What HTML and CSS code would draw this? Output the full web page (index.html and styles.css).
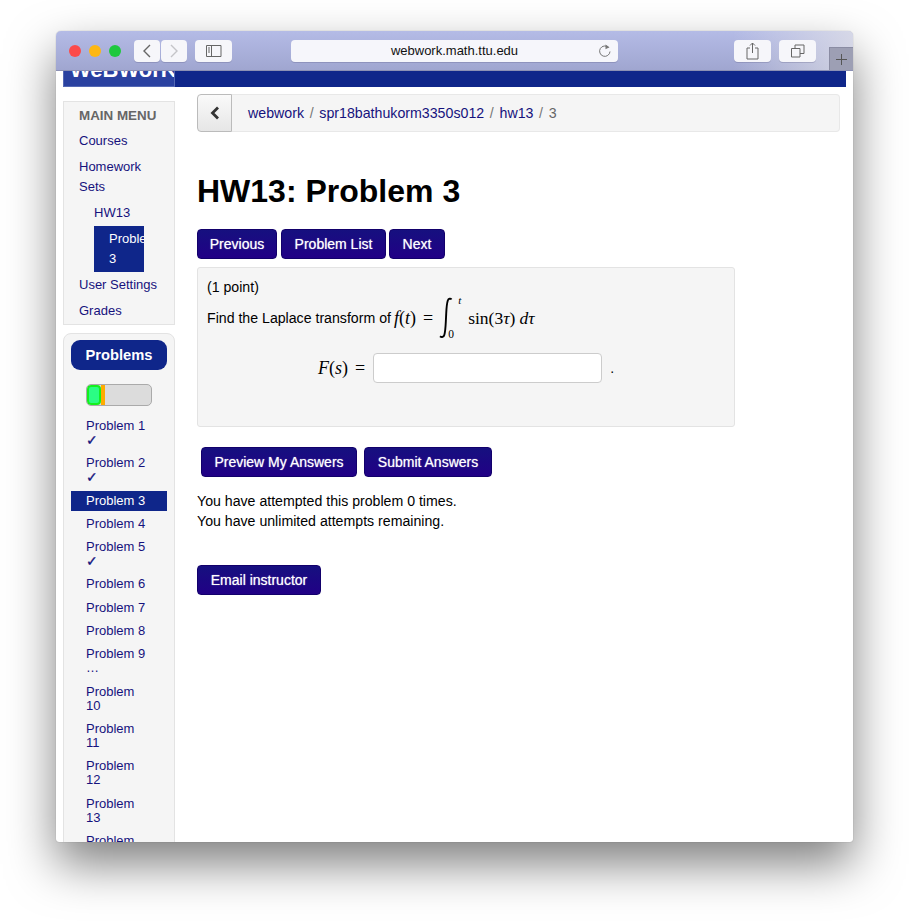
FILE: index.html
```html
<!DOCTYPE html>
<html lang="en">
<head>
<meta charset="utf-8">
<title>HW13: Problem 3</title>
<link rel="stylesheet" href="styles.css">
</head>
<body>
<div class="window">
  <div class="toolbar">
    <div class="lights"><span class="light red"></span><span class="light yellow"></span><span class="light green"></span></div>
    <div class="nav-pair">
      <span class="tool tool-nav"><svg width="12" height="16" viewBox="0 0 12 16"><path d="M9 2 3 8l6 6" fill="none" stroke="#666" stroke-width="1.4"/></svg></span>
      <span class="tool tool-nav"><svg width="12" height="16" viewBox="0 0 12 16"><path d="M3 2l6 6-6 6" fill="none" stroke="#c4c4c8" stroke-width="1.4"/></svg></span>
    </div>
    <span class="tool tool-side"><svg width="16" height="12" viewBox="0 0 16 12"><path d="M.5.5h14.500v11H.5zM5.500.5v11M2 3h2M2 5h2M2 7h2" fill="none" stroke="#666" stroke-width="1"/></svg></span>
    <div class="address"><span class="address-text">webwork.math.ttu.edu</span>
      <svg class="reload" width="13" height="14" viewBox="0 0 13 14"><path d="M10.500 3.500A5.200 5.200 0 1 0 12 7.500" fill="none" stroke="#777" stroke-width="1"/><path d="M7.500 0.500 11.500 3.200 7.500 5.200z" fill="#777"/></svg>
    </div>
    <span class="tool tool-share"><svg width="14" height="18" viewBox="0 0 14 18"><path d="M4 6H1v11h11V6H9M6.500 1v10M4 3.500 6.500 1 9 3.500" fill="none" stroke="#666" stroke-width="1"/></svg></span>
    <span class="tool tool-tabs"><svg width="14" height="14" viewBox="0 0 14 14"><path d="M.5 4.500h8.500v8.500H.5zM4 4.500V1h9v8.500H9" fill="none" stroke="#666" stroke-width="1"/></svg></span>
    <span class="new-tab"><svg width="13" height="13" viewBox="0 0 13 13"><path d="M6.500 1v11M1 6.500h11" stroke="#555" stroke-width="1" fill="none"/></svg></span>
  </div>
  <div class="page">
    <header class="banner"><span class="logo"><span class="logo-text">WeBWorK</span></span></header>
    <div class="columns">
      <aside class="sidebar">
        <nav class="menu">
          <div class="menu-title">MAIN MENU</div>
          <a class="menu-link">Courses</a>
          <a class="menu-link">Homework Sets</a>
          <a class="menu-link sub">HW13</a>
          <a class="menu-active"><span class="menu-active-first">Problem</span><span>3</span></a>
          <a class="menu-link">User Settings</a>
          <a class="menu-link">Grades</a>
        </nav>
        <section class="problems">
          <div class="pill">Problems</div>
          <div class="progress"><span class="p-green"></span><span class="p-orange"></span></div>
          <ul class="plist">
            <li><a>Problem 1<span class="check">✓</span></a></li>
            <li><a>Problem 2<span class="check">✓</span></a></li>
            <li class="current"><a>Problem 3</a></li>
            <li><a>Problem 4</a></li>
            <li><a>Problem 5<span class="check">✓</span></a></li>
            <li><a>Problem 6</a></li>
            <li><a>Problem 7</a></li>
            <li><a>Problem 8</a></li>
            <li><a>Problem 9<br>…</a></li>
            <li><a>Problem<br>10</a></li>
            <li><a>Problem<br>11</a></li>
            <li><a>Problem<br>12</a></li>
            <li><a>Problem<br>13</a></li>
            <li><a>Problem<br>14</a></li>
          </ul>
        </section>
      </aside>
      <main class="main">
        <div class="crumbs">
          <span class="back"><svg width="12" height="14" viewBox="0 0 12 14"><path d="M9 1.500 3.500 7 9 12.500" fill="none" stroke="#333" stroke-width="2.800"/></svg></span>
          <div class="crumb-bar"><a>webwork</a><i>/</i><a>spr18bathukorm3350s012</a><i>/</i><a>hw13</a><i>/</i><span class="crumb-last">3</span></div>
        </div>
        <h1 class="title">HW13: Problem 3</h1>
        <div class="nav-buttons">
          <button class="btn w-prev">Previous</button><button class="btn w-list">Problem List</button><button class="btn w-next">Next</button>
        </div>
        <section class="problem">
          <div class="pt">(1 point)</div>
          <div class="statement">
            <span>Find the Laplace transform of</span>
            <span class="math m-ft"><em>f</em>(<em>t</em>)<span class="eq">=</span></span>
            <span class="integral">
              <svg width="18" height="42" viewBox="0 0 18 42"><path d="M15.500 2.600c-.9-1.500-3-1.200-3.700.9C10.300 8 10.400 14 10 21c-.4 7-.4 12.500-1.700 17-.6 2-2.600 2.700-4.300 1.300" fill="none" stroke="#000" stroke-width="1.900"/></svg>
              <span class="lim-top"><em>t</em></span><span class="lim-bot">0</span>
            </span>
            <span class="math m-sin">sin(3<em>τ</em>) <em>dτ</em></span>
          </div>
          <div class="answer">
            <span class="math"><em>F</em>(<em>s</em>)<span class="eq">=</span></span>
            <input class="input" type="text" aria-label="answer">
            <span class="dot">.</span>
          </div>
        </section>
        <div class="submit-row">
          <button class="btn w-preview">Preview My Answers</button><button class="btn w-submit">Submit Answers</button>
        </div>
        <p class="attempts">You have attempted this problem 0 times.<br>You have unlimited attempts remaining.</p>
        <button class="btn w-email">Email instructor</button>
      </main>
    </div>
  </div>
</div>
</body>
</html>
```
FILE: styles.css
```css
* { box-sizing: border-box; }
html, body { margin: 0; height: 922px; overflow: hidden; background: #fff; }
body { padding: 31px 0 0 56px; font-family: "Liberation Sans", Arial, sans-serif; font-size: 14px; color: #000; }

.window {
  width: 797px; height: 811px; border-radius: 5px 5px 3px 3px; overflow: hidden; background: #fff;
  box-shadow: 0 22px 48px rgba(0,0,0,.5), 0 0 1px rgba(0,0,0,.4);
  display: flex; flex-direction: column;
}
.toolbar {
  height: 40px; flex: none; display: flex; align-items: flex-start; position: relative;
  background: linear-gradient(180deg, #b4bbe6 0%, #a0a6d0 100%);
  border-bottom: 1px solid #8b90b4; padding: 9px 0 0 13px;
}
.toolbar::after {
  content: ""; position: absolute; top: 0; right: 0; width: 120px; height: 39px;
  background: linear-gradient(90deg, rgba(226,226,232,0), rgba(226,226,232,.75));
  pointer-events: none;
}
.lights { display: flex; gap: 8px; margin-top: 5px; }
.light { width: 12px; height: 12px; border-radius: 50%; }
.red { background: #fc4a4a; }
.yellow { background: #fdb713; }
.green { background: #1fc83e; }
.tool { background: #f6f6fa; border-radius: 4px; height: 22px; display: flex; align-items: center; justify-content: center; box-shadow: 0 1px 0 rgba(80,80,120,.25); z-index: 1; }
.nav-pair { display: flex; gap: 1px; margin-left: 13px; }
.tool-nav { width: 26px; }
.tool-side { width: 37px; margin-left: 8px; }
.address {
  width: 327px; height: 22px; margin-left: 59px; background: #f6f6fb; border-radius: 4px; position: relative;
  text-align: center; line-height: 22px; font-size: 13px; box-shadow: 0 1px 0 rgba(80,80,120,.25); z-index: 1;
}
.address-text { color: #111; }
.reload { position: absolute; right: 7px; top: 4px; }
.tool-share { width: 37px; margin-left: 116px; }
.tool-tabs { width: 37px; margin-left: 8px; }
.new-tab {
  position: absolute; right: 0; top: 16px; width: 24px; height: 23px; background: #9d9fb4;
  border: 1px solid #8a8ca3; border-bottom: 0; border-right: 0; display: flex; align-items: center; justify-content: center; z-index: 1;
}

.page { flex: 1; min-height: 0; overflow: hidden; padding: 0 7px; }
.banner { height: 16px; background: #0f268a; overflow: hidden; }
.logo {
  display: block; width: 112px; height: 16px; background: #2a41a0; border: 1px solid #5468b4; border-top: 0;
  overflow: hidden; position: relative;
}
.logo-text { position: absolute; left: 6px; top: -16px; color: #fff; font-size: 22px; line-height: 29px; font-weight: bold; white-space: nowrap; }

.columns { display: flex; align-items: flex-start; }
.sidebar { width: 112px; flex: none; margin-top: 14px; }
.main { width: 643px; margin-left: 22px; margin-top: 7px; flex: none; font-size: 14.150px; }
a { color: #15127d; }

.menu { height: 224px; background: #f5f5f5; border: 1px solid #e3e3e3; padding: 4px 0 0 15px; font-size: 13px; }
.menu-title { font-weight: bold; color: #666; font-size: 13.400px; line-height: 20px; margin-bottom: 5px; }
.menu-link { display: block; line-height: 20px; margin-bottom: 6px; width: 90px; }
.menu-link.sub { padding-left: 15px; width: 90px; margin-bottom: 3px; }
.menu-active { display: flex; flex-direction: column; width: 50px; height: 46px; margin: 0 0 3px 15px; background: #0f268a; color: #fff; padding: 3px 0 0 15px; line-height: 20px; overflow: hidden; white-space: nowrap; }
.menu-active-first { display: block; line-height: 20px; }

.problems { margin-top: 8px; height: 520px; background: #f5f5f5; border: 1px solid #e3e3e3; border-radius: 8px; padding: 6px 7px 0; font-size: 13px; }
.pill { height: 30px; background: #0f268a; border-radius: 9px; color: #fff; font-weight: bold; font-size: 14.700px; line-height: 31px; text-align: center; }
.progress { width: 66px; height: 22px; margin: 14px 0 0 15px; background: #dcdcdc; border: 1px solid #aaa; border-radius: 5px; display: flex; overflow: hidden; }
.p-green { width: 14px; background: #2bfd84; border: 2px solid #14f01e; border-radius: 4px; }
.p-orange { width: 4px; background: #ffab00; }
.plist { list-style: none; margin: 8px 0 0; padding: 0; }
.plist li { padding: 5px 15px 4.350px; line-height: 14px; }
.check { display: block; height: 14px; line-height: 14px; font-size: 14px; -webkit-text-stroke: .3px currentColor; overflow: visible; }
.plist li.current { background: #0f268a; height: 20px; padding-top: 3px; margin: 2px 0 0; }
.plist li.current a { color: #fff; }
.plist li.current + li { padding-top: 6px; }

.crumbs { display: flex; height: 38px; }
.back { width: 35px; height: 38px; flex: none; border: 1px solid #bbb; border-radius: 4px 0 0 4px; background: linear-gradient(180deg, #fafafa, #e6e6e6); display: flex; align-items: center; justify-content: center; }
.crumb-bar { flex: 1; background: #f5f5f5; border: 1px solid #e8e8e8; border-left: 0; border-radius: 0 4px 4px 0; padding-left: 16px; line-height: 36px; font-size: 14.200px; }
.crumb-bar i { font-style: normal; color: #777; margin: 0 5.700px; }
.crumb-last { color: #666; }

.title { margin: 40px 0 0; font-size: 32px; line-height: 38px; font-weight: bold; }
.nav-buttons { margin-top: 19px; display: flex; }
.btn {
  display: block; height: 30px; padding: 0; border: 1px solid #12006b; border-radius: 4px;
  font: 14px/28px "Liberation Sans", Arial, sans-serif; color: #fff; text-align: center; text-shadow: 0 0 1px rgba(255,255,255,.7);
  background: linear-gradient(180deg, #16107f 0%, #210086 100%);
}
.w-prev { width: 80px; }
.w-list { width: 105px; margin-left: 4px; }
.w-next { width: 56px; margin-left: 3px; }
.w-preview { width: 156px; margin-left: 4px; }
.w-submit { width: 128px; margin-left: 7px; }
.w-email { width: 124px; margin-top: 34px; }

.problem { margin-top: 8px; width: 538px; height: 160px; background: #f5f5f5; border: 1px solid #e3e3e3; border-radius: 3px; padding: 10px 9px 0; }
.pt { line-height: 19px; }
.statement { display: flex; align-items: center; height: 46px; margin-top: -2px; }
.math { font-family: "Liberation Serif", "Times New Roman", serif; font-size: 18px; white-space: nowrap; }
.eq { margin-left: 7px; }
.m-ft { margin-left: 3px; }
.integral { position: relative; width: 32px; height: 42px; margin-left: 3px; flex: none; }
.integral svg { display: block; }
.lim-top { position: absolute; left: 22px; top: -3px; font: italic 11px/12px "Liberation Serif", serif; }
.lim-bot { position: absolute; left: 12px; top: 31px; font: 11.500px/12px "Liberation Serif", serif; }
.m-sin { font-size: 17.500px; }
.answer { display: flex; align-items: center; height: 30px; margin-top: 12px; padding-left: 111px; }
.input { width: 229px; height: 30px; margin-left: 8px; border: 1px solid #ccc; border-radius: 4px; background: #fff; }
.dot { margin-left: 8px; font-size: 14px; }

.submit-row { display: flex; margin-top: 20px; }
.attempts { margin: 14px 0 0; line-height: 20px; }
```
